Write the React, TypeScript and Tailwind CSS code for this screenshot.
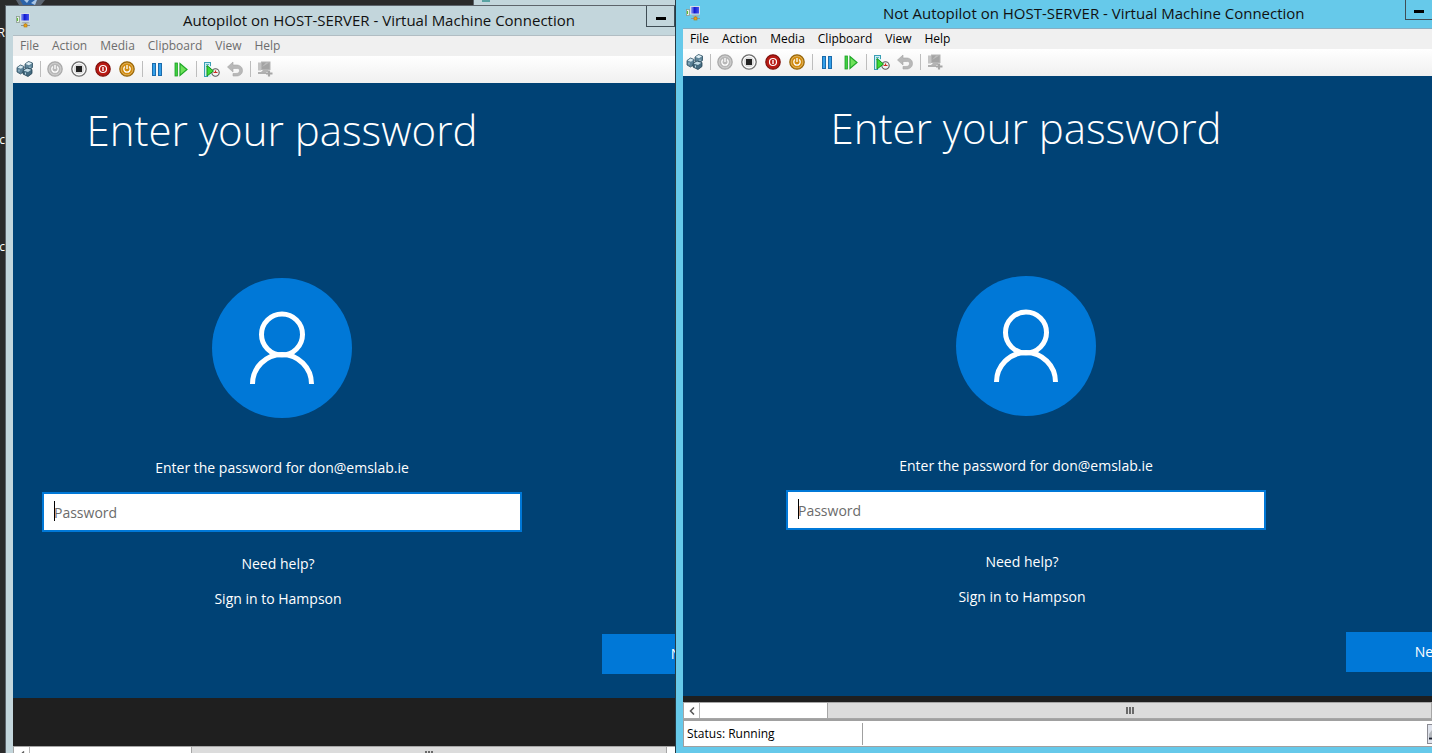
import { useId } from 'react'
import type { ReactNode } from 'react'
import clsx from 'clsx'

interface ToolItem {
  label: string;
  icon: ReactNode;
}

interface VmWindowProps {
  title: string;
  active: boolean;
}

// Toolbar icons
const KeysIcon = () => (
  <svg width="18" height="16" viewBox="0 0 18 16">
    <path d="M1 6.500l3.500-2.500L8 5.500v5L4.500 13 1 11z" fill="#5b8197" stroke="#2d4f62" strokeWidth=".8" />
    <path d="M1.500 6.500l3-2L7.500 5.700 5 7.700z" fill="#d5e8f0" />
    <path d="M9 3l3.500-2.500L16.500 2v4.500L13 9 9 7z" fill="#5f8599" stroke="#2d4f62" strokeWidth=".8" />
    <path d="M9.500 3l3-2L16 2.200 13 4.300z" fill="#e0eff5" />
    <path d="M7 9.500L11 7l5 1.500v4L12 15.500l-5-2.500z" fill="#456b80" stroke="#203f50" strokeWidth=".8" />
    <path d="M7.500 9.500L11 7.600l4.300 1.200L12 11z" fill="#c3dbe6" />
    <path d="M3 8.500v2M9.500 11.500v2M14 5.500v1.500" stroke="#b7d3e0" />
  </svg>
)

const PowerGlyph = ({ rim, face }: { rim: string; face: string }) => (
  <svg width="16" height="16" viewBox="0 0 16 16">
    <circle cx="8" cy="8" r="7.200" fill={face} stroke={rim} strokeWidth="1.200" />
    <circle cx="8" cy="8" r="5.900" fill="none" stroke="#fff" strokeOpacity=".3" />
    <path d="M5.900 5.600a3.200 3.200 0 1 0 4.200 0M8 4v4" fill="none" stroke="#fff" strokeWidth="1.300" />
  </svg>
)

const TurnOffIcon = () => (
  <svg width="16" height="16" viewBox="0 0 16 16">
    <circle cx="8" cy="8" r="7.200" fill="#dedede" stroke="#6c6c6c" strokeWidth="1.300" />
    <circle cx="8" cy="8" r="5.800" fill="none" stroke="#fff" />
    <rect x="5" y="5" width="6" height="6" fill="#222" />
  </svg>
)

const ShutDownIcon = () => (
  <svg width="16" height="16" viewBox="0 0 16 16">
    <circle cx="8" cy="8" r="7.200" fill="#b81a14" stroke="#7e0f0b" strokeWidth="1.200" />
    <circle cx="8" cy="8" r="3.500" fill="none" stroke="#fff" strokeWidth="1.200" />
    <path d="M8 6v4" stroke="#fff" strokeWidth="1.400" />
  </svg>
)

const PauseIcon = () => (
  <svg width="16" height="16" viewBox="0 0 16 16">
    <rect x="3.500" y="2.500" width="3" height="12" fill="#35a0ea" stroke="#1b6bab" />
    <rect x="9.500" y="2.500" width="3" height="12" fill="#35a0ea" stroke="#1b6bab" />
  </svg>
)

const ResetIcon = () => (
  <svg width="16" height="16" viewBox="0 0 16 16">
    <rect x="2" y="2" width="2.400" height="13" fill="#3fd040" stroke="#1d9e25" strokeWidth=".8" />
    <path d="M7 2.500v12l7-6z" fill="#6fe25a" stroke="#1fa828" strokeWidth="1.200" />
  </svg>
)

const CheckpointIcon = () => (
  <svg width="17" height="17" viewBox="0 0 17 17">
    <path d="M1 1.500h7v14.500H1z" fill="#cdeef5" />
    <path d="M1.500 1v15M1 1.500h7M7.500 1v4M1 15.500h4" fill="none" stroke="#3a9fb5" />
    <path d="M3 3.500h3M3 5.500h2" stroke="#5cb3c4" />
    <circle cx="12.500" cy="11.500" r="3.700" fill="#f3f3f3" stroke="#5a5a5a" strokeWidth="1.100" />
    <path d="M10.500 11.500h4M12.500 9.500v2" fill="none" stroke="#c92a22" strokeWidth="1.200" />
    <path d="M4 4.500v10.500l6.500-5z" fill="#3fdc36" stroke="#15901c" />
  </svg>
)

const RevertIcon = () => (
  <svg width="16" height="16" viewBox="0 0 16 16">
    <path
      d="M.5 6L6 1v3h3.500C13 4 15.500 6.300 15.500 9.500S13 15 9.500 15H6v-2.500h3c2.300 0 3.500-1.200 3.500-3S11.300 7.500 9 7.500H6V11z"
      fill="#b8b8b8"
      stroke="#a6a6a6"
      strokeWidth=".6"
    />
  </svg>
)

const SessionIcon = () => (
  <svg width="17" height="16" viewBox="0 0 17 16">
    <rect x="1" y="1.500" width="3" height="8" fill="#c4c4c4" />
    <rect x="4.500" y="1" width="8.500" height="7.500" fill="#a4a4a4" stroke="#b4b4b4" />
    <path d="M5 6l4-4.500h3.500z" fill="#bdbdbd" />
    <path d="M6 9h5l1 2H4z" fill="#b4b4b4" />
    <path d="M1 12h8" stroke="#b0b0b0" strokeWidth="2" />
    <path d="M12 9.500v6M9 12.500h6.500" stroke="#a6a6a6" strokeWidth="2.200" />
  </svg>
)

const VmIcon = () => {
  const id = useId()
  return (
    <svg width="15" height="15" viewBox="0 0 15 15" className="shrink-0">
      <defs>
        <linearGradient id={id} x1="0" x2="1">
          <stop offset="0" stopColor="#a9bcfa" />
          <stop offset=".45" stopColor="#1119d2" />
          <stop offset="1" stopColor="#4c5cf0" />
        </linearGradient>
      </defs>
      <rect x=".5" y="3.500" width="3" height="6" fill="#e6eee4" stroke="#8c9c90" strokeWidth=".8" />
      <path d="M1.500 5v3" stroke="#58c234" />
      <rect x="4.500" y=".5" width="9" height="7.500" fill={`url(#${id})`} stroke="#d5dbe5" />
      <path d="M6.500 9h6l1 1.200h-8z" fill="#aab0b5" />
      <path d="M9.500 10v2M5 12.500h9" stroke="#8b9296" />
      <rect x="8" y="11" width="3" height="3" fill="#eba41b" stroke="#b1760b" strokeWidth=".6" />
    </svg>
  )
}

const menus = ['File', 'Action', 'Media', 'Clipboard', 'View', 'Help']

// Each inner list is one group, split by a separator
const toolGroups: ToolItem[][] = [
  [{ label: 'Ctrl+Alt+Delete', icon: <KeysIcon /> }],
  [
    { label: 'Start', icon: <PowerGlyph rim="#a9a9a9" face="#b8b8b8" /> },
    { label: 'Turn Off', icon: <TurnOffIcon /> },
    { label: 'Shut Down', icon: <ShutDownIcon /> },
    { label: 'Save', icon: <PowerGlyph rim="#94650b" face="#d18b0e" /> },
  ],
  [
    { label: 'Pause', icon: <PauseIcon /> },
    { label: 'Reset', icon: <ResetIcon /> },
  ],
  [
    { label: 'Checkpoint', icon: <CheckpointIcon /> },
    { label: 'Revert', icon: <RevertIcon /> },
  ],
  [{ label: 'Enhanced Session', icon: <SessionIcon /> }],
]

const TitleBar = ({ title, active }: VmWindowProps) => (
  <div
    className={clsx(
      'flex shrink-0 border-b',
      active ? 'h-[29px] border-[#86aec3] bg-[#66c9ea]' : 'h-[30px] border-[#b1bdc3] bg-[#c3d6dc]'
    )}
  >
    <div className={clsx('flex w-6 pl-[3px]', active ? 'pt-[6px]' : 'pt-[7px]')}>
      <VmIcon />
    </div>
    <h2
      className={clsx(
        'flex-1 text-[15px] whitespace-nowrap text-[#111]',
        active ? 'pl-44 leading-[26px]' : 'pl-[146px] leading-7'
      )}
    >
      {title}
    </h2>
    <button
      type="button"
      aria-label="Minimize"
      className={clsx(
        'flex shrink-0 justify-center border-b border-l border-[#3f4d55]',
        active ? 'h-5 w-[27px] pt-[10px]' : 'h-[21px] w-[29px] border-r pt-[11px]'
      )}
    >
      <span className="h-[3px] w-[10px] bg-black" />
    </button>
  </div>
)

const MenuBar = ({ active }: { active: boolean }) => (
  <nav
    className={clsx(
      'flex h-5 shrink-0 gap-px bg-[#f0f0f0] pl-px text-xs',
      active ? 'text-black' : 'text-[#6d6d6d]'
    )}
  >
    {menus.map((menu) => (
      <button key={menu} type="button" className="px-[6px] leading-5">
        {menu}
      </button>
    ))}
  </nav>
)

const Toolbar = () => (
  <div className="flex h-[27px] shrink-0 items-start overflow-hidden bg-linear-to-b from-white to-[#f0f0f0] pt-px">
    {toolGroups.map((group, i) => (
      <div key={group[0].label} className="flex items-center">
        {i > 0 && <span className="mr-[2px] ml-[3px] h-4 w-px bg-[#bdbdbd]" />}
        {group.map((tool) => (
          <button
            key={tool.label}
            type="button"
            aria-label={tool.label}
            className="flex h-6 w-6 items-center justify-center"
          >
            {tool.icon}
          </button>
        ))}
      </div>
    ))}
  </div>
)

const SignIn = ({ active }: { active: boolean }) => {
  const id = useId()
  return (
    <form
      className={clsx(
        'flex min-h-0 flex-1 items-start gap-20 overflow-hidden bg-[#004275] text-white',
        active ? 'pt-5 pl-[103px]' : 'pt-[15px] pl-[29px]'
      )}
    >
      <div className="flex w-[480px] shrink-0 flex-col items-center text-sm leading-5">
        <h1 className="text-[42px] leading-[64px] font-light whitespace-nowrap">Enter your password</h1>
        <svg width="140" height="140" viewBox="0 0 140 140" className="mt-[116px]">
          <circle cx="70" cy="70" r="70" fill="#0078d7" />
          <g fill="none" stroke="#fff" strokeWidth="5">
            <circle cx="70" cy="56.500" r="20.500" />
            <path d="M40.500 106A29.500 29.500 0 0 1 99.500 106" />
          </g>
        </svg>
        <label htmlFor={id} className="mt-10">Enter the password for don@emslab.ie</label>
        <div className="relative mt-[14px] w-full">
          <input
            id={id}
            type="password"
            placeholder="Password"
            className="block h-10 w-full border-2 border-[#0078d7] bg-white px-[10px] text-black placeholder:text-[#6b6b6b] focus:outline-none"
          />
          <span className="absolute top-[9px] left-3 h-5 w-px bg-black" />
        </div>
        <div className="mt-[22px] flex flex-col items-center gap-[15px] pr-2">
          <a href="#help">Need help?</a>
          <a href="#signin">Sign in to Hampson</a>
        </div>
      </div>
      <button type="submit" className="mt-[536px] h-10 w-[168px] shrink-0 bg-[#0078d7] text-sm">
        Next
      </button>
    </form>
  )
}

const ScrollBar = ({ active }: { active: boolean }) => (
  <div className="flex h-[17px] w-full shrink-0 border-y border-l border-[#a6a6a6] bg-white">
    <button
      type="button"
      aria-label="Scroll left"
      className="flex w-4 shrink-0 items-center justify-center border-r border-[#b8b8b8]"
    >
      <svg width="6" height="8" viewBox="0 0 6 8">
        <path d="M5 .5L1.500 4L5 7.500" fill="none" stroke="#555" strokeWidth="1.500" />
      </svg>
    </button>
    <div className={clsx('shrink-0', active ? 'w-[127px]' : 'w-[161px]')} />
    <div className="flex flex-1 items-center justify-center gap-px border-x border-[#a6a6a6] bg-[#dcdcdc]">
      <span className="h-[7px] w-[2px] bg-[#6a6a6a]" />
      <span className="h-[7px] w-[2px] bg-[#6a6a6a]" />
      <span className="h-[7px] w-[2px] bg-[#6a6a6a]" />
    </div>
    {!active && <div className="w-2 shrink-0" />}
  </div>
)

const StatusBar = () => (
  <div className="flex h-7 shrink-0 items-center border-t-2 border-b border-l border-[#a0a0a0] bg-white text-xs text-black">
    <span className="w-[178px] pl-[3px]">Status: Running</span>
    <span className="h-[22px] w-px bg-[#a0a0a0]" />
    <span className="ml-auto flex h-5 w-[5px] items-center border-y border-l border-[#8b8b93] bg-[#dfe3ec]">
      <svg width="4" height="14" viewBox="0 0 4 14">
        <path d="M1 7l3-4v7H1z" fill="#b4b8bd" />
        <path d="M1 11.500h3" stroke="#1c2230" strokeWidth="2" />
      </svg>
    </span>
  </div>
)

const VmWindow = ({ title, active }: VmWindowProps) => (
  <section
    className={clsx(
      'flex min-w-0 flex-1 flex-col overflow-hidden border-l pl-[7px]',
      active ? 'border-[#263a44] bg-[#66c9ea] pb-[6px]' : 'border-t border-[#5d646b] bg-[#c3d6dc]'
    )}
  >
    <TitleBar title={title} active={active} />
    <MenuBar active={active} />
    <Toolbar />
    <SignIn active={active} />
    <div className={clsx('shrink-0 bg-[#1f1f1f]', active ? 'h-[6px]' : 'h-12')} />
    {active ? (
      <>
        <ScrollBar active />
        <StatusBar />
      </>
    ) : (
      <div className="h-[7px] shrink-0 overflow-hidden">
        <ScrollBar active={false} />
      </div>
    )}
  </section>
)

// Ends of the desktop icon captions, mostly hidden behind the window
const DesktopEdge = () => (
  <div className="flex w-[5px] shrink-0 flex-col items-end gap-[91px] overflow-hidden pt-5 text-xs text-white">
    <span>R</span>
    <span>c</span>
    <span>c</span>
  </div>
)

const App = () => (
  <main className="flex h-screen overflow-hidden bg-[#2b2b2b] font-['Open_Sans','Noto_Sans',sans-serif]">
    <div className="flex min-w-0 flex-[675] flex-col">
      {/* Sliver of desktop and background window above the left window */}
      <div className="flex h-[5px] shrink-0 overflow-hidden">
        <svg width="30" height="5" viewBox="0 0 30 5" className="ml-4 shrink-0">
          <path d="M0 0h29l-4 5H3z" fill="#5b6470" />
          <path d="M4 0h17l-3 5H7z" fill="#2b62a8" />
          <path d="M8 0l3 3 2-3zM15 3l4-3h2l-2 5z" fill="#a9c6e6" />
        </svg>
        <div className="ml-auto w-[30%] border-l border-[#5d646b] bg-[#c3d6dc] pl-2">
          <div className="h-[2px] w-2 bg-[#5aa3a3]" />
        </div>
      </div>
      <div className="flex min-h-0 flex-1">
        <DesktopEdge />
        <VmWindow title="Autopilot on HOST-SERVER - Virtual Machine Connection" active={false} />
      </div>
    </div>
    <div className="flex min-w-0 flex-[757]">
      <VmWindow title="Not Autopilot on HOST-SERVER - Virtual Machine Connection" active />
    </div>
  </main>
)

export default App
